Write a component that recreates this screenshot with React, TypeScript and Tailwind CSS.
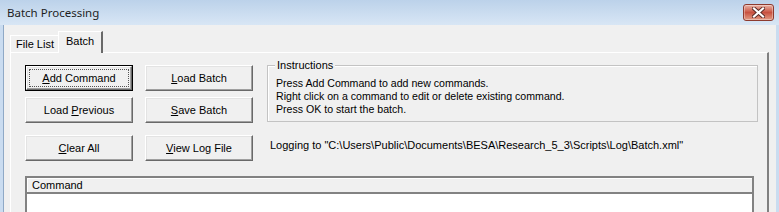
import React from 'react';

const raised =
  'border border-t-white border-l-white border-r-[#696969] border-b-[#696969] shadow-[inset_-1px_-1px_0_#a0a0a0,inset_1px_1px_0_#e3e3e3] bg-[#f0f0f0]';

function WinButton({ label, mnemonic, focused }: { label: string; mnemonic: number; focused?: boolean }) {
  const text = (
    <span>
      {label.slice(0, mnemonic)}
      <span className="underline underline-offset-[1px]">{label[mnemonic]}</span>
      {label.slice(mnemonic + 1)}
    </span>
  );
  if (focused) {
    return (
      <div className="w-[108px] h-[26px] border border-black">
        <div className={`${raised} w-full h-full flex items-center justify-center p-[2px]`}>
          <div className="w-full h-full flex items-center justify-center border border-dotted border-[#555]">{text}</div>
        </div>
      </div>
    );
  }
  return <div className={`${raised} w-[108px] h-[26px] flex items-center justify-center`}>{text}</div>;
}

function CloseButton() {
  return (
    <div className="w-[31px] h-[17px] rounded-[3px] border border-[#8d3a2e] bg-gradient-to-b from-[#e8b2a6] via-[#c85140] to-[#e09a84] flex items-center justify-center shadow-[inset_0_0_0_1px_rgba(255,255,255,0.35)]">
      <svg width="13" height="11" viewBox="0 0 13 11">
        <path d="M2 1.5 L11 9.5 M11 1.5 L2 9.5" stroke="#5a2a24" strokeWidth="4" strokeLinecap="square" />
        <path d="M2 1.5 L11 9.5 M11 1.5 L2 9.5" stroke="#ffffff" strokeWidth="2.2" strokeLinecap="square" />
      </svg>
    </div>
  );
}

export default function App() {
  return (
    <div
      className="w-[779px] h-[212px] overflow-hidden flex flex-col bg-[#cadcf0] text-[11px] text-black"
      style={{ fontFamily: '"Liberation Sans", Arial, sans-serif' }}
    >
      {/* title bar */}
      <div className="h-[25px] flex items-center justify-between pl-[7px] pr-[5px] bg-gradient-to-b from-[#bcd2ea] to-[#d8e6f5] shrink-0">
        <span className="text-[11.5px] text-[#1e1e1e] pt-[1px]" style={{ fontFamily: '"Noto Sans", "Liberation Sans", sans-serif' }}>
          Batch Processing
        </span>
        <div className="self-start mt-[4px]">
          <CloseButton />
        </div>
      </div>

      {/* client area */}
      <div className="flex-1 flex px-[3px] min-h-0">
        <div className="flex-1 flex flex-col bg-[#f0f0f0] pl-[6px] pr-[7px] pt-[6px] border-l border-[#8fa9c6]">
          {/* tabs */}
          <div className="h-[21px] flex items-end shrink-0">
            <div className="w-[49px] h-[17px] border-t border-l border-white flex items-center justify-center pt-[1px] relative z-0">
              File List
            </div>
            <div className="w-[45px] h-[22px] -mb-[1px] -ml-[1px] bg-[#f0f0f0] border-t border-l border-white border-r-2 border-r-[#696969] flex items-center justify-center pb-[2px] relative z-10">
              Batch
            </div>
          </div>

          {/* tab page */}
          <div className="flex-1 border-t border-l border-white border-r-2 border-r-[#808080] pl-[14px] pt-[12px] flex flex-col min-h-0">
            <div className="flex">
              <div className="grid grid-cols-[108px_108px] gap-x-[12px] gap-y-[6px]">
                <WinButton label="Add Command" mnemonic={0} focused />
                <WinButton label="Load Batch" mnemonic={0} />
                <WinButton label="Load Previous" mnemonic={5} />
                <WinButton label="Save Batch" mnemonic={0} />
              </div>

              <div className="ml-[14px] w-[491px] h-[57px] border border-[#c3c3c3] shadow-[inset_1px_1px_0_#ffffff] relative pl-[8px] pt-[11px] leading-[13px] text-[10.6px]">
                <span className="absolute left-[7px] -top-[7px] px-[2px] bg-[#f0f0f0] leading-[13px] text-[11px]">Instructions</span>
                <div>Press Add Command to add new commands.</div>
                <div>Right click on a command to edit or delete existing command.</div>
                <div>Press OK to start the batch.</div>
              </div>
            </div>

            <div className="flex mt-[12px]">
              <div className="flex gap-x-[12px]">
                <WinButton label="Clear All" mnemonic={0} />
                <WinButton label="View Log File" mnemonic={0} />
              </div>
              <div className="ml-[17px] pt-[2px]">
                Logging to "C:\Users\Public\Documents\BESA\Research_5_3\Scripts\Log\Batch.xml"
              </div>
            </div>

            {/* command list */}
            <div className="mt-[15px] w-[729px] flex-1 border-t-2 border-l-2 border-r-2 border-[#828282] bg-white flex flex-col">
              <div className="h-[16px] bg-[#f0f0f0] border-b-2 border-[#828282] flex items-center pl-[5px] shadow-[inset_1px_1px_0_#ffffff]">
                Command
              </div>
              <div className="flex-1 bg-white" />
            </div>
          </div>
        </div>
      </div>
    </div>
  );
}
